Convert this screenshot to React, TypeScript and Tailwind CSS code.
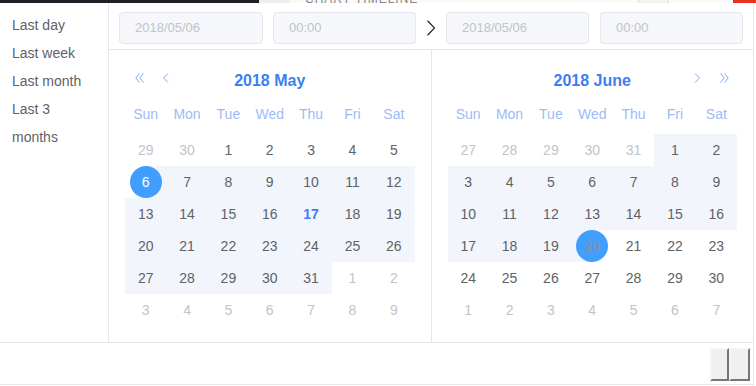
import React from "react";

type Cell = { d: number; other?: boolean; range?: boolean; start?: boolean; end?: boolean; today?: boolean };

const mk = (
  nums: number[],
  opts: (d: number, i: number) => Partial<Cell>
): Cell[] => nums.map((d, i) => ({ d, ...opts(d, i) }));

const range = (a: number, b: number) => Array.from({ length: b - a + 1 }, (_, i) => a + i);

const mayRows: Cell[][] = [
  mk([29, 30, 1, 2, 3, 4, 5], (_d, i) => ({ other: i < 2 })),
  mk(range(6, 12), (d) => (d === 6 ? { start: true } : { range: true })),
  mk(range(13, 19), (d) => ({ range: true, today: d === 17 })),
  mk(range(20, 26), () => ({ range: true })),
  mk([27, 28, 29, 30, 31, 1, 2], (_d, i) => (i < 5 ? { range: true } : { other: true })),
  mk(range(3, 9), () => ({ other: true })),
];

const juneRows: Cell[][] = [
  mk([27, 28, 29, 30, 31, 1, 2], (_d, i) => (i < 5 ? { other: true } : { range: true })),
  mk(range(3, 9), () => ({ range: true })),
  mk(range(10, 16), () => ({ range: true })),
  mk(range(17, 23), (d) => (d < 20 ? { range: true } : d === 20 ? { end: true } : {})),
  mk(range(24, 30), () => ({})),
  mk(range(1, 7), () => ({ other: true })),
];

const weekdays = ["Sun", "Mon", "Tue", "Wed", "Thu", "Fri", "Sat"];

function DayCell({ c }: { c: Cell }) {
  let bg = "";
  if (c.range) bg = "bg-[#f2f6fc]";
  else if (c.start) bg = "bg-[linear-gradient(to_right,transparent_50%,#f2f6fc_50%)]";
  else if (c.end) bg = "bg-[linear-gradient(to_right,#f2f6fc_50%,transparent_50%)]";
  const selected = c.start || c.end;
  return (
    <div className={`h-[32px] flex items-center justify-center ${bg}`}>
      {selected ? (
        <span
          className={`w-[32px] h-[32px] rounded-full bg-[#409eff] flex items-center justify-center text-[14px] ${
            c.start ? "text-white" : "text-[#8a8f99]"
          }`}
        >
          {c.d}
        </span>
      ) : (
        <span
          className={`text-[14px] ${
            c.other ? "text-[#c0c4cc]" : c.today ? "text-[#3b7ff2] font-bold" : "text-[#606266]"
          }`}
        >
          {c.d}
        </span>
      )}
    </div>
  );
}

function DoubleLeft() {
  return (
    <svg width="9" height="10" viewBox="0 0 9 10" fill="none" stroke="#7ea6f6" strokeWidth="1">
      <polyline points="4.5,0.5 0.8,5 4.5,9.5" />
      <polyline points="8.5,0.5 4.8,5 8.5,9.5" />
    </svg>
  );
}
function SingleLeft() {
  return (
    <svg width="7" height="10" viewBox="0 0 7 10" fill="none" stroke="#7ea6f6" strokeWidth="1">
      <polyline points="6,0.5 1.5,5 6,9.5" />
    </svg>
  );
}
function SingleRight() {
  return (
    <svg width="7" height="10" viewBox="0 0 7 10" fill="none" stroke="#7ea6f6" strokeWidth="1">
      <polyline points="1,0.5 5.5,5 1,9.5" />
    </svg>
  );
}
function DoubleRight() {
  return (
    <svg width="9" height="10" viewBox="0 0 9 10" fill="none" stroke="#7ea6f6" strokeWidth="1">
      <polyline points="0.5,0.5 4.2,5 0.5,9.5" />
      <polyline points="4.5,0.5 8.2,5 4.5,9.5" />
    </svg>
  );
}

function Panel({ title, rows, side }: { title: string; rows: Cell[][]; side: "left" | "right" }) {
  return (
    <div className={`flex-1 pt-4 pb-4 ${side === "left" ? "border-r border-[#e4e7ed]" : ""}`}>
      <div className="h-[30px] grid grid-cols-[1fr_auto_1fr] items-center">
        <div className="flex items-center">
          {side === "left" && (
            <div className="flex items-center pl-[26px] gap-[18px] -mt-[6px]">
              <DoubleLeft />
              <SingleLeft />
            </div>
          )}
        </div>
        <div className="text-[16px] font-bold text-[#3d7ff3]">{title}</div>
        <div className="flex items-center justify-end">
          {side === "right" && (
            <div className="flex items-center pr-[24px] gap-[19px] -mt-[6px]">
              <SingleRight />
              <DoubleRight />
            </div>
          )}
        </div>
      </div>
      <div className="px-4">
        <div className="grid grid-cols-7 h-[30px] mt-[3px] items-center">
          {weekdays.map((w) => (
            <div key={w} className="text-center text-[14px] text-[#9dbcf6]">
              {w}
            </div>
          ))}
        </div>
        <div className="mt-[5px]">
          {rows.map((r, i) => (
            <div key={i} className="grid grid-cols-7">
              {r.map((c, j) => (
                <DayCell key={j} c={c} />
              ))}
            </div>
          ))}
        </div>
      </div>
    </div>
  );
}

function Input({ text, w }: { text: string; w: string }) {
  return (
    <div
      className={`${w} h-[32px] rounded-[4px] border border-[#e4e7ed] bg-[#f5f7fa] flex items-center pl-[15px] text-[13px] text-[#c0c4cc]`}
    >
      {text}
    </div>
  );
}

export default function App() {
  return (
    <div className="w-[756px] h-[386px] bg-white overflow-hidden" style={{ fontFamily: '"Liberation Sans", Arial, sans-serif' }}>
      <div className="h-[3px] flex overflow-hidden">
        <div className="w-[259px] bg-[#1e1f24]" />
        <div className="w-[31px] bg-[#eeeeee]" />
        <div className="w-[348px] bg-[#fafafa] relative overflow-hidden">
          <span className="absolute left-[15px] -top-[10px] text-[12px] text-[#888] tracking-[1px]">CHART TIMELINE</span>
        </div>
        <div className="w-[30px] bg-[#f2f2f2] border-l border-[#ddd]" />
        <div className="w-[65px] bg-[#fafafa] border-l border-[#ddd]" />
        <div className="flex-1 bg-[#e8341c]" />
      </div>
      <div className="w-[754px] border-r border-[#e4e7ed]">
        <div className="flex h-[339px]">
          <div className="w-[110px] border-r border-[#e4e7ed] pt-[8px] pl-3">
            {["Last day", "Last week", "Last month", "Last 3", "months"].map((t) => (
              <div key={t} className="h-[28px] leading-[28px] text-[14px] text-[#606266]">
                {t}
              </div>
            ))}
          </div>
          <div className="flex-1 flex flex-col">
            <div className="h-[47px] border-b border-[#e4e7ed] flex items-start pt-[9px] px-[10px]">
              <Input text="2018/05/06" w="w-[144px]" />
              <div className="w-[10px]" />
              <Input text="00:00" w="w-[143px]" />
              <div className="w-[30px] h-[32px] flex items-center justify-center">
                <svg width="10" height="16" viewBox="0 0 10 16" fill="none" stroke="#303133" strokeWidth="1.3">
                  <polyline points="1.5,0.8 8.5,8 1.5,15.2" />
                </svg>
              </div>
              <Input text="2018/05/06" w="w-[143px]" />
              <div className="w-[11px]" />
              <Input text="00:00" w="w-[143px]" />
            </div>
            <div className="flex flex-1">
              <Panel title="2018 May" rows={mayRows} side="left" />
              <Panel title="2018 June" rows={juneRows} side="right" />
            </div>
          </div>
        </div>
        <div className="h-[43px] border-t border-b border-[#e4e7ed] flex items-center justify-end pr-[3px]">
          <div className="flex mt-[1px]">
            <div className="w-[19px] h-[33px] bg-[#efefef] border-2 border-t-[#f4f4f4] border-l-[#f4f4f4] border-r-[#767676] border-b-[#767676]" />
            <div className="w-[21px] h-[33px] bg-[#efefef] border-2 border-t-[#f4f4f4] border-l-[#f4f4f4] border-r-[#767676] border-b-[#767676]" />
          </div>
        </div>
      </div>
    </div>
  );
}
